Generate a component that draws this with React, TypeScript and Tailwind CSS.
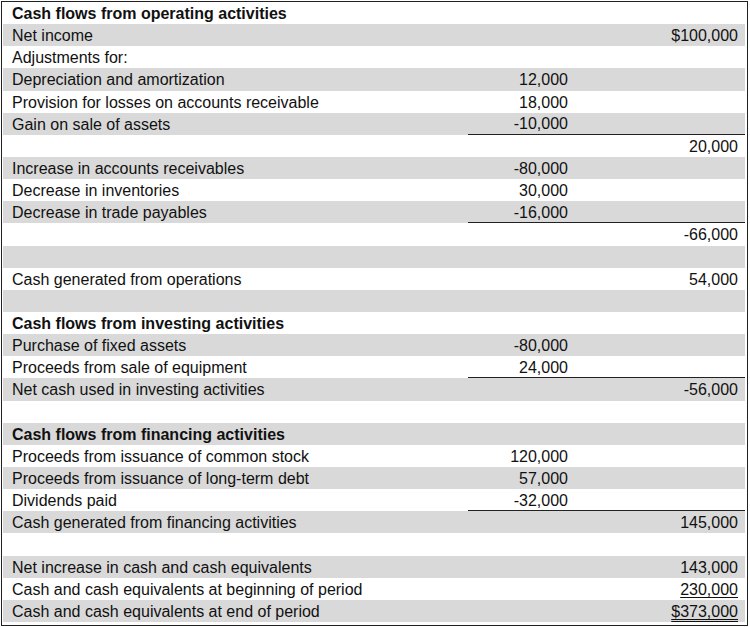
type Row = {
  label?: string
  a?: string
  b?: string
  bold?: boolean
  rule?: boolean
  b2?: 'single' | 'double'
}

const rows: Row[] = [
  { label: 'Cash flows from operating activities', bold: true },
  { label: 'Net income', b: '$100,000' },
  { label: 'Adjustments for:' },
  { label: 'Depreciation and amortization', a: '12,000' },
  { label: 'Provision for losses on accounts receivable', a: '18,000' },
  { label: 'Gain on sale of assets', a: '-10,000', rule: true },
  { b: '20,000' },
  { label: 'Increase in accounts receivables', a: '-80,000' },
  { label: 'Decrease in inventories', a: '30,000' },
  { label: 'Decrease in trade payables', a: '-16,000', rule: true },
  { b: '-66,000' },
  {},
  { label: 'Cash generated from operations', b: '54,000' },
  {},
  { label: 'Cash flows from investing activities', bold: true },
  { label: 'Purchase of fixed assets', a: '-80,000' },
  { label: 'Proceeds from sale of equipment', a: '24,000', rule: true },
  { label: 'Net cash used in investing activities', b: '-56,000' },
  {},
  { label: 'Cash flows from financing activities', bold: true },
  { label: 'Proceeds from issuance of common stock', a: '120,000' },
  { label: 'Proceeds from issuance of long-term debt', a: '57,000' },
  { label: 'Dividends paid', a: '-32,000', rule: true },
  { label: 'Cash generated from financing activities', b: '145,000' },
  {},
  { label: 'Net increase in cash and cash equivalents', b: '143,000' },
  { label: 'Cash and cash equivalents at beginning of period', b: '230,000', b2: 'single' },
  { label: 'Cash and cash equivalents at end of period', b: '$373,000', b2: 'double' },
]

export default function App() {
  return (
    <div className="w-[750px] h-[627px] bg-white pt-[1px] pl-[1px] text-[#111] font-['Liberation_Sans',Arial,sans-serif] text-[16px]">
      <div className="w-[747px] h-[625px] border border-[#222] pl-[1px] pr-[2px]">
        {rows.map((r, i) => (
          <div
            key={i}
            className={`grid grid-cols-[465px_110px_1fr] h-[22.15px] pt-[2px] items-center leading-none ${
              i % 2 === 1 ? 'bg-[#d9d9d9]' : 'bg-white'
            }`}
          >
            <div className={`pl-[9px] whitespace-nowrap ${r.bold ? 'font-bold' : ''}`}>{r.label}</div>
            <div className={`col-span-2 grid grid-cols-[110px_1fr] h-full items-center ${r.rule ? 'border-b border-[#222]' : ''}`}>
              <div className="text-right pr-[10px]">{r.a}</div>
              <div className="text-right pr-[7px]">
                {r.b2 === 'single' && <span className="underline underline-offset-2">{r.b}</span>}
                {r.b2 === 'double' && (
                  <span className="underline decoration-double underline-offset-2">{r.b}</span>
                )}
                {!r.b2 && r.b}
              </div>
            </div>
          </div>
        ))}
      </div>
    </div>
  )
}
